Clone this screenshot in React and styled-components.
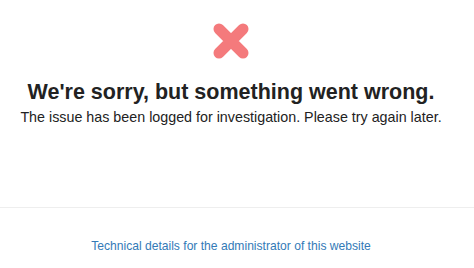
import React from "react";
import styled, { createGlobalStyle } from "styled-components";

const GlobalStyle = createGlobalStyle`
  html, body {
    margin: 0;
    padding: 0;
    background: #fff;
  }
  body {
    font-family: "Liberation Sans", Arial, sans-serif;
    color: #333;
  }
`;

const Page = styled.div`
  width: 474px;
  height: 268px;
  display: flex;
  flex-direction: column;
  overflow: hidden;
`;

const Message = styled.section`
  display: flex;
  flex-direction: column;
  align-items: center;
  padding: 21px 12px 0 0;
  height: 207px;
  box-sizing: border-box;
`;

const ErrorIcon = styled.svg`
  width: 40px;
  height: 40px;
  display: block;
`;

const Title = styled.h1`
  margin: 19px 0 0;
  font-size: 21.5px;
  line-height: 24px;
  font-weight: bold;
  color: #222;
  white-space: nowrap;
`;

const Subtitle = styled.p`
  margin: 4px 0 0;
  font-size: 14.3px;
  line-height: 18px;
  color: #222;
  white-space: nowrap;
`;

const Divider = styled.hr`
  margin: 0;
  border: 0;
  border-top: 1px solid #eee;
`;

const Footer = styled.footer`
  display: flex;
  justify-content: center;
  padding: 30px 12px 0 0;
`;

const DetailsLink = styled.a`
  font-size: 12.1px;
  line-height: 16px;
  color: #337ab7;
  text-decoration: none;
`;

export default function App() {
  return (
    <Page>
      <GlobalStyle />
      <Message>
        <ErrorIcon viewBox="0 0 40 40">
          <path
            d="M8 8 L32 32 M32 8 L8 32"
            stroke="#f47a7c"
            strokeWidth="11"
            strokeLinecap="round"
            fill="none"
          />
        </ErrorIcon>
        <Title>We're sorry, but something went wrong.</Title>
        <Subtitle>The issue has been logged for investigation. Please try again later.</Subtitle>
      </Message>
      <Divider />
      <Footer>
        <DetailsLink href="#">Technical details for the administrator of this website</DetailsLink>
      </Footer>
    </Page>
  );
}
